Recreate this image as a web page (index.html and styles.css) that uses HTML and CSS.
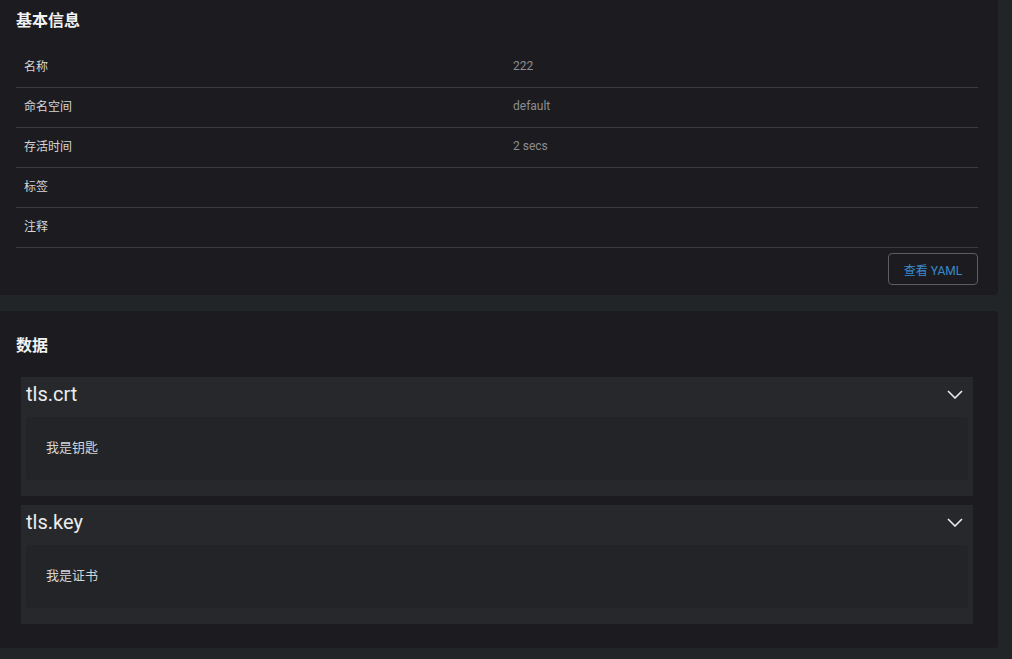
FILE: index.html
```html
<!DOCTYPE html>
<html lang="zh-CN">
<head>
<meta charset="utf-8">
<title>Secret 详情</title>
<link rel="stylesheet" href="styles.css">
</head>
<body>
<div class="page">
  <section class="card card-basic">
    <h2 class="card-title">基本信息</h2>
    <div class="info-table">
      <div class="info-row"><div class="info-label">名称</div><div class="info-value">222</div></div>
      <div class="info-row"><div class="info-label">命名空间</div><div class="info-value">default</div></div>
      <div class="info-row"><div class="info-label">存活时间</div><div class="info-value">2 secs</div></div>
      <div class="info-row"><div class="info-label">标签</div><div class="info-value"></div></div>
      <div class="info-row"><div class="info-label">注释</div><div class="info-value"></div></div>
    </div>
    <div class="actions">
      <button class="btn-outline" type="button">查看 YAML</button>
    </div>
  </section>

  <section class="card card-data">
    <h2 class="card-title">数据</h2>
    <div class="accordion">
      <div class="acc-item">
        <div class="acc-header">
          <span class="acc-name">tls.crt</span>
          <svg class="chevron" width="16" height="9" viewBox="0 0 16 9"><polyline points="1,1 8,8 15,1" fill="none" stroke="#ececec" stroke-width="1.6"/></svg>
        </div>
        <div class="acc-panel">我是钥匙</div>
      </div>
      <div class="acc-item">
        <div class="acc-header">
          <span class="acc-name">tls.key</span>
          <svg class="chevron" width="16" height="9" viewBox="0 0 16 9"><polyline points="1,1 8,8 15,1" fill="none" stroke="#ececec" stroke-width="1.6"/></svg>
        </div>
        <div class="acc-panel">我是证书</div>
      </div>
    </div>
  </section>
</div>
</body>
</html>
```

FILE: styles.css
```css
* { box-sizing: border-box; }

html, body {
  margin: 0;
  padding: 0;
  background: #222528;
  height: 100%;
  overflow: hidden;
}

body {
  font-family: Roboto, "Noto Sans CJK SC", sans-serif;
  color: #d6d6d6;
}

.page {
  display: flex;
  flex-direction: column;
  gap: 16px;
  margin: -14px 14px 0 -4px;
}

.card {
  background: #1c1c20;
  border-radius: 4px;
  padding: 20px 20px 10px;
}

.card-title {
  margin: 0;
  font-size: 16px;
  font-weight: 700;
  line-height: 28px;
  color: #f2f2f2;
}

.card-basic .card-title {
  padding-top: 1px;
  line-height: 27px;
}

.info-table {
  margin-top: 14px;
}

.info-row {
  display: grid;
  grid-template-columns: 489px 1fr;
  height: 40px;
  align-items: center;
  padding-bottom: 4px;
  border-bottom: 1px solid #3d3d41;
  font-size: 12px;
}

.info-label {
  padding-left: 8px;
  color: #d4d4d6;
}

.info-value {
  padding-left: 8px;
  padding-top: 1px;
  color: #8d8d91;
}

.actions {
  display: flex;
  justify-content: flex-end;
  margin-top: 5px;
}

.btn-outline {
  width: 90px;
  height: 32px;
  background: transparent;
  border: 1px solid #5d5d62;
  border-radius: 4px;
  color: #3a8acb;
  font-family: inherit;
  font-size: 12px;
  padding: 0;
}

.card-data {
  padding-bottom: 20px;
}

.card-data .card-title {
  padding-top: 1px;
  line-height: 27px;
}

.accordion {
  margin-top: 18px;
  display: flex;
  flex-direction: column;
  gap: 9px;
  padding: 0 5px 4px;
}

.acc-item {
  background: #26282c;
  padding-bottom: 16px;
}

.acc-header {
  height: 40px;
  display: flex;
  align-items: center;
  justify-content: space-between;
  padding: 0 10px 6px 5px;
}

.acc-name {
  font-size: 20px;
  line-height: 34px;
  color: #ececec;
}

.chevron {
  display: block;
}

.acc-panel {
  margin: 0 5px;
  height: 63px;
  line-height: 61px;
  padding: 0 20px;
  background: #222428;
  border-radius: 4px;
  font-size: 13px;
  color: #d4d4d6;
}
```
